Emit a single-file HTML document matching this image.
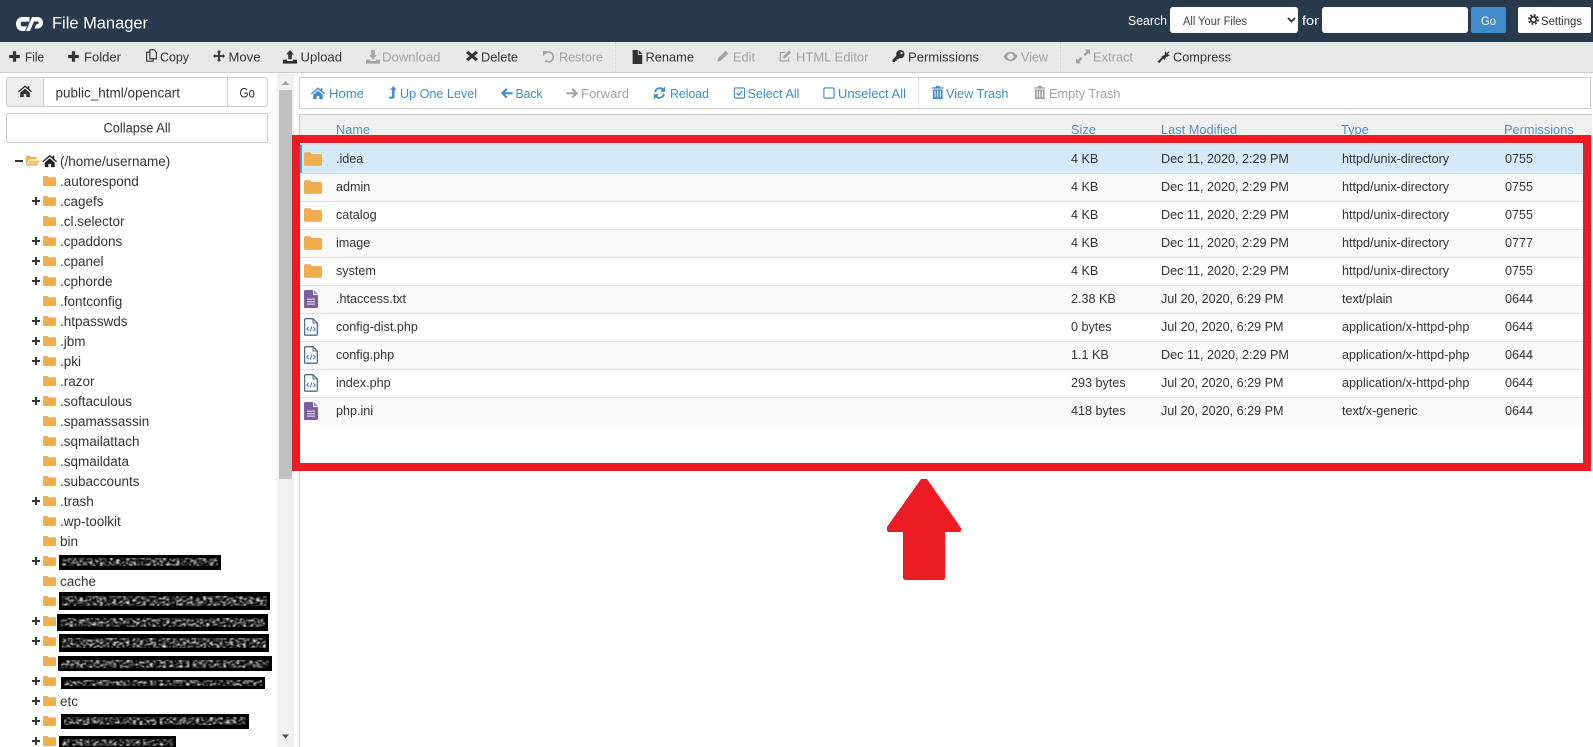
<!DOCTYPE html>
<html><head><meta charset="utf-8"><title>File Manager</title>
<style>
html,body{margin:0;padding:0;background:#fff;width:1593px;height:747px;overflow:hidden;font-family:"Liberation Sans",sans-serif;color:#333}
.a{position:absolute;box-sizing:border-box}
#stage{position:absolute;left:0;top:0;width:1593px;height:747px;overflow:hidden}
.box{background:#fff;border:1px solid #ccc}
ul{list-style:none;margin:0;padding:0;position:absolute;left:0;top:151px;width:277px;font-size:13.5px;color:#333}
li{height:20px;line-height:21px;position:relative;padding-left:60px;white-space:nowrap}
li svg{position:absolute;left:43px;top:5px;width:13px;height:10px;fill:#f0ad4e}
li.p:before{content:"";position:absolute;left:32px;top:9px;width:8px;height:2px;background:#333}
li.p:after{content:"";position:absolute;left:35px;top:6px;width:2px;height:8px;background:#333}
table{position:absolute;left:299px;top:145px;width:1293px;table-layout:fixed;border-collapse:collapse;font-size:12.6px;color:#333}
td{height:28px;padding:0;border-bottom:1px solid #ddd;box-sizing:border-box;white-space:nowrap}
tr:nth-child(even) td{background:#f9f9f9}
tr.sel td{background:#d5eaf8}
tr:last-child td{border-bottom:0}
td svg{display:block;margin-left:5px}
text{font-family:"Liberation Sans",sans-serif}
</style></head><body>
<div id="stage">
<div class="a" style="left:0;top:0;width:1593px;height:42px;background:#2a3a4d"></div>
<div class="a" style="left:0;top:42px;width:1593px;height:31px;background:#e8e8e8;border-bottom:1px solid #ccc"></div>
<div class="a" style="left:615px;top:42px;width:0;height:30px;border-left:1px dotted #ccc"></div>
<div class="a" style="left:1060px;top:42px;width:0;height:30px;border-left:1px dotted #ccc"></div>

<div class="a" style="left:1170px;top:7px;width:128px;height:26px;background:#fff;border-radius:3px"></div>
<div class="a" style="left:1322px;top:7px;width:146px;height:26px;background:#fff;border-radius:3px"></div>
<div class="a" style="left:1471px;top:7px;width:35px;height:26px;background:#428bca;border-radius:2px"></div>
<div class="a" style="left:1518px;top:7px;width:73px;height:26px;background:#fff;border-radius:2px"></div>

<div class="a" style="left:6px;top:77px;width:38px;height:30px;background:#eee;border:1px solid #ccc;border-radius:3px 0 0 3px"></div>
<div class="a box" style="left:43px;top:77px;width:185px;height:30px"></div>
<div class="a box" style="left:227px;top:77px;width:41px;height:30px;border-radius:0 3px 3px 0"></div>
<div class="a box" style="left:6px;top:113px;width:262px;height:30px;border-radius:2px"></div>

<div class="a" style="left:277px;top:73px;width:17px;height:674px;background:#f1f1f1"></div>
<div class="a" style="left:279px;top:90px;width:13px;height:389px;background:#c1c1c1"></div>

<div class="a box" style="left:299px;top:77px;width:1292px;height:32px"></div>
<div class="a" style="left:918px;top:78px;width:0;height:30px;border-left:1px dotted #ccc"></div>
<div class="a" style="left:299px;top:114px;width:1293px;height:633px;border:1px solid #ccc;border-bottom:0;border-right:0"></div>
<div class="a" style="left:300px;top:115px;width:1292px;height:30px;background:#f0f0f0;border-bottom:1px solid #ddd"></div>

<ul>
<li>(/home/username)</li>
<li><svg viewBox="0 0 13 10"><use href="#fold"/></svg>.autorespond</li>
<li class="p"><svg viewBox="0 0 13 10"><use href="#fold"/></svg>.cagefs</li>
<li><svg viewBox="0 0 13 10"><use href="#fold"/></svg>.cl.selector</li>
<li class="p"><svg viewBox="0 0 13 10"><use href="#fold"/></svg>.cpaddons</li>
<li class="p"><svg viewBox="0 0 13 10"><use href="#fold"/></svg>.cpanel</li>
<li class="p"><svg viewBox="0 0 13 10"><use href="#fold"/></svg>.cphorde</li>
<li><svg viewBox="0 0 13 10"><use href="#fold"/></svg>.fontconfig</li>
<li class="p"><svg viewBox="0 0 13 10"><use href="#fold"/></svg>.htpasswds</li>
<li class="p"><svg viewBox="0 0 13 10"><use href="#fold"/></svg>.jbm</li>
<li class="p"><svg viewBox="0 0 13 10"><use href="#fold"/></svg>.pki</li>
<li><svg viewBox="0 0 13 10"><use href="#fold"/></svg>.razor</li>
<li class="p"><svg viewBox="0 0 13 10"><use href="#fold"/></svg>.softaculous</li>
<li><svg viewBox="0 0 13 10"><use href="#fold"/></svg>.spamassassin</li>
<li><svg viewBox="0 0 13 10"><use href="#fold"/></svg>.sqmailattach</li>
<li><svg viewBox="0 0 13 10"><use href="#fold"/></svg>.sqmaildata</li>
<li><svg viewBox="0 0 13 10"><use href="#fold"/></svg>.subaccounts</li>
<li class="p"><svg viewBox="0 0 13 10"><use href="#fold"/></svg>.trash</li>
<li><svg viewBox="0 0 13 10"><use href="#fold"/></svg>.wp-toolkit</li>
<li><svg viewBox="0 0 13 10"><use href="#fold"/></svg>bin</li>
<li class="p"><svg viewBox="0 0 13 10"><use href="#fold"/></svg></li>
<li><svg viewBox="0 0 13 10"><use href="#fold"/></svg>cache</li>
<li><svg viewBox="0 0 13 10"><use href="#fold"/></svg></li>
<li class="p"><svg viewBox="0 0 13 10"><use href="#fold"/></svg></li>
<li class="p"><svg viewBox="0 0 13 10"><use href="#fold"/></svg></li>
<li><svg viewBox="0 0 13 10"><use href="#fold"/></svg></li>
<li class="p"><svg viewBox="0 0 13 10"><use href="#fold"/></svg></li>
<li class="p"><svg viewBox="0 0 13 10"><use href="#fold"/></svg>etc</li>
<li class="p"><svg viewBox="0 0 13 10"><use href="#fold"/></svg></li>
<li class="p"><svg viewBox="0 0 13 10"><use href="#fold"/></svg></li>
</ul>

<table>
<colgroup><col style="width:37px"><col style="width:735px"><col style="width:90px"><col style="width:181px"><col style="width:163px"><col style="width:87px"></colgroup>
<tr class="sel"><td><svg width="18" height="14" viewBox="0 0 13 10" fill="#f0ad4e"><use href="#fold"/></svg></td><td>.idea</td><td>4 KB</td><td>Dec 11, 2020, 2:29 PM</td><td>httpd/unix-directory</td><td>0755</td></tr>
<tr><td><svg width="18" height="14" viewBox="0 0 13 10" fill="#f0ad4e"><use href="#fold"/></svg></td><td>admin</td><td>4 KB</td><td>Dec 11, 2020, 2:29 PM</td><td>httpd/unix-directory</td><td>0755</td></tr>
<tr><td><svg width="18" height="14" viewBox="0 0 13 10" fill="#f0ad4e"><use href="#fold"/></svg></td><td>catalog</td><td>4 KB</td><td>Dec 11, 2020, 2:29 PM</td><td>httpd/unix-directory</td><td>0755</td></tr>
<tr><td><svg width="18" height="14" viewBox="0 0 13 10" fill="#f0ad4e"><use href="#fold"/></svg></td><td>image</td><td>4 KB</td><td>Dec 11, 2020, 2:29 PM</td><td>httpd/unix-directory</td><td>0777</td></tr>
<tr><td><svg width="18" height="14" viewBox="0 0 13 10" fill="#f0ad4e"><use href="#fold"/></svg></td><td>system</td><td>4 KB</td><td>Dec 11, 2020, 2:29 PM</td><td>httpd/unix-directory</td><td>0755</td></tr>
<tr><td><svg width="14" height="18" viewBox="0 0 14 18"><use href="#txt"/></svg></td><td>.htaccess.txt</td><td>2.38 KB</td><td>Jul 20, 2020, 6:29 PM</td><td>text/plain</td><td>0644</td></tr>
<tr><td><svg width="14" height="18" viewBox="0 0 14 18"><use href="#php"/></svg></td><td>config-dist.php</td><td>0 bytes</td><td>Jul 20, 2020, 6:29 PM</td><td>application/x-httpd-php</td><td>0644</td></tr>
<tr><td><svg width="14" height="18" viewBox="0 0 14 18"><use href="#php"/></svg></td><td>config.php</td><td>1.1 KB</td><td>Dec 11, 2020, 2:29 PM</td><td>application/x-httpd-php</td><td>0644</td></tr>
<tr><td><svg width="14" height="18" viewBox="0 0 14 18"><use href="#php"/></svg></td><td>index.php</td><td>293 bytes</td><td>Jul 20, 2020, 6:29 PM</td><td>application/x-httpd-php</td><td>0644</td></tr>
<tr><td><svg width="14" height="18" viewBox="0 0 14 18"><use href="#txt"/></svg></td><td>php.ini</td><td>418 bytes</td><td>Jul 20, 2020, 6:29 PM</td><td>text/x-generic</td><td>0644</td></tr>
</table>
<div class="a" style="left:300px;top:145px;width:2px;height:28px;background:#2aa9dd"></div>

<svg class="a" style="left:0;top:0" width="1593" height="747" viewBox="0 0 1593 747">
<defs>
<symbol id="fold" viewBox="0 0 13 10"><path d="M1 0h3.5l1.2 1.4H12a1 1 0 0 1 1 1V9a1 1 0 0 1-1 1H1a1 1 0 0 1-1-1V1a1 1 0 0 1 1-1z"/></symbol>
<symbol id="txt" viewBox="0 0 14 18"><path fill="#7d5e9e" d="M1 0h8v5h5v12a1 1 0 0 1-1 1H1a1 1 0 0 1-1-1V1a1 1 0 0 1 1-1z"/><path fill="#a48fbd" d="M10 0l4 4h-4z"/><path fill="#d9d2e4" d="M3 8.5h8v1.3H3zM3 11h8v1.3H3zM3 13.5h8v1.3H3z"/></symbol>
<symbol id="php" viewBox="0 0 14 18"><path fill="#fff" stroke="#4f6d8c" stroke-width="1.3" d="M1.6.7h7.4l4.3 4.3v11.2a1 1 0 0 1-1 1H1.6a1 1 0 0 1-1-1V1.7a1 1 0 0 1 1-1z"/><path fill="none" stroke="#4f6d8c" d="M9 1v4h4"/><path fill="none" stroke="#3b7fbf" stroke-width="1.1" d="M4.6 9L2.8 11l1.8 2M9.4 9l1.8 2-1.8 2M7.8 8.5l-1.6 5"/></symbol>
<symbol id="plus" viewBox="0 0 16 16"><path d="M6 1.5h4V6h4.5v4H10v4.5H6V10H1.5V6H6z"/></symbol>
<symbol id="copy" viewBox="0 0 16 16"><path fill="none" stroke="currentColor" stroke-width="1.4" d="M6 1h5l3 3v8H6zM6 4H2v11h8v-3"/></symbol>
<symbol id="move" viewBox="0 0 16 16"><path d="M8 0l3 3H9.2v3.8H13V5l3 3-3 3V9.2H9.2V13H11l-3 3-3-3h1.8V9.2H3V11L0 8l3-3v1.8h3.8V3H5z"/></symbol>
<symbol id="up" viewBox="0 0 16 16"><path d="M8 0l4.5 5H10v5.5H6V5H3.5zM0 11h4.8v1.5h6.4V11H16v4.5H0z"/></symbol>
<symbol id="down" viewBox="0 0 16 16"><path d="M6 0h4v5.5h2.5L8 11 3.5 5.5H6zM0 11h4.8v1.5h6.4V11H16v4.5H0z"/></symbol>
<symbol id="x" viewBox="0 0 16 16"><path d="M3.5 1.5L8 5.5l4.5-4 2.800 2.800L11 8l4.300 3.700-2.800 2.800L8 10.500l-4.500 4-2.800-2.800L5 8 .7 4.300z"/></symbol>
<symbol id="undo" viewBox="0 0 16 16"><path fill="none" stroke="currentColor" stroke-width="2" d="M3.5 4.5A6 6 0 1 1 4 13"/><path d="M1 1l6 .5L1.5 7.5z"/></symbol>
<symbol id="file" viewBox="0 0 16 16"><path d="M3 0h6v5.500h5V16H3zM10 0l4 4.500h-4z"/></symbol>
<symbol id="pen" viewBox="0 0 16 16"><path d="M11.500 1L15 4.500 5 14.500l-4.500 1 1-4.500z"/></symbol>
<symbol id="edit" viewBox="0 0 16 16"><path fill="none" stroke="currentColor" stroke-width="1.500" d="M12 10v4H1.500V3.500H8"/><path d="M12.500 1L15 3.500 8 10.500l-3 .6.600-3z"/></symbol>
<symbol id="key" viewBox="0 0 16 16"><path fill-rule="evenodd" d="M10.500 0A5.500 5.500 0 1 1 9 10.800L7.500 12.500H5.500v2h-2V16H0v-3l5.300-5.500A5.500 5.500 0 0 1 10.500 0zm1.500 2.500a1.500 1.500 0 1 0 0 3 1.500 1.500 0 0 0 0-3z"/></symbol>
<symbol id="eye" viewBox="0 0 16 16"><path fill-rule="evenodd" d="M8 2.500c4 0 7 3.500 8 5.500-1 2-4 5.500-8 5.500S1 10 0 8c1-2 4-5.500 8-5.500zM8 4.500a3.500 3.500 0 1 0 0 7 3.500 3.500 0 0 0 0-7z"/></symbol>
<symbol id="ext" viewBox="0 0 16 16"><path d="M10 0h6v6l-2-2-3.500 3.500-2-2L12 2zM6 16H0v-6l2 2 3.500-3.500 2 2L4 14z"/></symbol>
<symbol id="com" viewBox="0 0 16 16"><path d="M10 1l2 3 2.500-2.500 1 1L13 5l3 1.500-5 2.500-1.500 3.500-2-2-4.500 5.500-2.500-1.500 5-5L5.500 8l4-2z"/></symbol>
<symbol id="home" viewBox="0 0 16 16"><path d="M8 1.500l3 2.600V2.500h2v3.300l3 2.600-1 1.100-7-5.900-7 5.900L0 8.400zM2.500 10L8 5.300l5.500 4.700v5H9.500v-3.500h-3V15h-4z"/></symbol>
<symbol id="lvl" viewBox="0 0 16 16"><path d="M9 0l4 4.800h-2.400v7.700c0 2-1 3.200-3 3.200H4V13h2.500c.6 0 1-.4 1-1V4.800H5z"/></symbol>
<symbol id="left" viewBox="0 0 16 16"><path d="M7.500 2l1.800 1.800L6 7h9.500v2.500H6l3.300 3.200-1.800 1.800L1 8.200z"/></symbol>
<symbol id="right" viewBox="0 0 16 16"><path d="M8.500 2L6.700 3.800 10 7H.5v2.500H10l-3.300 3.200 1.800 1.800L15 8.200z"/></symbol>
<symbol id="rel" viewBox="0 0 16 16"><path fill="none" stroke="currentColor" stroke-width="2.200" d="M2.500 7A5.800 5.800 0 0 1 12.500 4M13.500 9a5.800 5.800 0 0 1-10 3"/><path d="M15 0v6.500H8.500zM1 16V9.500h6.500z"/></symbol>
<symbol id="chk" viewBox="0 0 16 16"><rect x="1.700" y="1.700" width="12.600" height="12.600" rx="1.500" fill="none" stroke="currentColor" stroke-width="1.400"/><path fill="none" stroke="currentColor" stroke-width="1.700" d="M4.500 8l2.500 2.500 4.500-5"/></symbol>
<symbol id="sq" viewBox="0 0 16 16"><rect x="1.700" y="1.700" width="12.600" height="12.600" rx="1.500" fill="none" stroke="currentColor" stroke-width="1.400"/></symbol>
<symbol id="tr" viewBox="0 0 14 16"><path d="M5 0h4l1 1.800h4v1.500H0V1.800h4zM1 4.300h12V16H1zM3.200 6v8h1.100V6zM6.400 6v8h1.200V6zM9.700 6v8h1.100V6z" fill-rule="evenodd"/></symbol>
<symbol id="gear" viewBox="0 0 16 16"><circle cx="8" cy="8" r="4" fill="none" stroke="currentColor" stroke-width="2.600"/><circle cx="8" cy="8" r="6.700" fill="none" stroke="currentColor" stroke-width="2.400" stroke-dasharray="3 2.260"/></symbol>
<filter id="nz" x="0" y="0" width="100%" height="100%" color-interpolation-filters="sRGB"><feTurbulence type="fractalNoise" baseFrequency=".3 .5" numOctaves="2" seed="4"/><feColorMatrix values="3 0 0 0 -1.300  3 0 0 0 -1.300  3 0 0 0 -1.300  0 0 0 0 1"/><feGaussianBlur stdDeviation=".4"/></filter>
</defs>

<!-- header -->
<path fill="#fff" d="M29.500 17H22.500C18.700 17 16 20 16 24s2.700 7 6.500 7H25l2-4.600h-4.200c-1.300 0-2.200-1-2.200-2.400s.9-2.400 2.200-2.400h6.700zM32 17h5.500c3.500 0 5.500 2.600 5.500 5.800s-2.500 5.700-5.500 5.700h-3l1.800-4.300h.9c.9 0 1.500-.6 1.500-1.400s-.6-1.400-1.500-1.400H34L30 31h-4z"/>
<g fill="#fff"><text x="52" y="28.500" font-size="17" textLength="96" lengthAdjust="spacingAndGlyphs">File Manager</text>
<text x="1128" y="25" font-size="13" textLength="39" lengthAdjust="spacingAndGlyphs">Search</text>
<text x="1302" y="25" font-size="13" textLength="17" lengthAdjust="spacingAndGlyphs">for</text>
<text x="1481" y="25" font-size="12" textLength="15" lengthAdjust="spacingAndGlyphs">Go</text></g>
<text x="1183" y="25" font-size="11.500" fill="#444" textLength="64" lengthAdjust="spacingAndGlyphs">All Your Files</text>
<path d="M1288 18l3.500 3.500L1295 18" fill="none" stroke="#333" stroke-width="1.800"/>
<use href="#gear" x="1528" y="14" width="11" height="11" color="#333" fill="#333"/>
<text x="1541" y="25" font-size="11.500" fill="#333" textLength="41" lengthAdjust="spacingAndGlyphs">Settings</text>

<!-- main toolbar -->
<g fill="#333" color="#333" font-size="13.200">
<use href="#plus" x="8" y="50" width="13" height="13"/><text x="25" y="61.500" textLength="19" lengthAdjust="spacingAndGlyphs">File</text>
<use href="#plus" x="67" y="50" width="13" height="13"/><text x="84" y="61.500" textLength="37" lengthAdjust="spacingAndGlyphs">Folder</text>
<use href="#copy" x="145" y="49" width="13" height="13"/><text x="160" y="61.500" textLength="29" lengthAdjust="spacingAndGlyphs">Copy</text>
<use href="#move" x="213" y="50" width="12" height="12"/><text x="228.500" y="61.500" textLength="32" lengthAdjust="spacingAndGlyphs">Move</text>
<use href="#up" x="283" y="50" width="14" height="14"/><text x="300.500" y="61.500" textLength="41.500" lengthAdjust="spacingAndGlyphs">Upload</text>
<use href="#x" x="465.500" y="49.500" width="13" height="13"/><text x="481" y="61.500" textLength="37" lengthAdjust="spacingAndGlyphs">Delete</text>
<use href="#file" x="630" y="50" width="14" height="14"/><text x="645.500" y="61.500" textLength="48.500" lengthAdjust="spacingAndGlyphs">Rename</text>
<use href="#key" x="892.500" y="50" width="12" height="12"/><text x="908" y="61.500" textLength="71" lengthAdjust="spacingAndGlyphs">Permissions</text>
<use href="#com" x="1157" y="50" width="13" height="13"/><text x="1173" y="61.500" textLength="58" lengthAdjust="spacingAndGlyphs">Compress</text>
</g>
<g fill="#a3a3a3" color="#a3a3a3" font-size="13.200">
<use href="#down" x="366" y="50" width="14" height="14"/><text x="382" y="61.500" textLength="58.500" lengthAdjust="spacingAndGlyphs">Download</text>
<use href="#undo" x="542" y="50" width="13" height="13"/><text x="559" y="61.500" textLength="44" lengthAdjust="spacingAndGlyphs">Restore</text>
<use href="#pen" x="717" y="50" width="12" height="12"/><text x="733" y="61.500" textLength="22" lengthAdjust="spacingAndGlyphs">Edit</text>
<use href="#edit" x="779" y="49.500" width="13" height="13"/><text x="796" y="61.500" textLength="72.500" lengthAdjust="spacingAndGlyphs">HTML Editor</text>
<use href="#eye" x="1003" y="49.500" width="15" height="14"/><text x="1021" y="61.500" textLength="27" lengthAdjust="spacingAndGlyphs">View</text>
<use href="#ext" x="1076" y="49.500" width="14" height="14"/><text x="1093" y="61.500" textLength="40" lengthAdjust="spacingAndGlyphs">Extract</text>
</g>

<!-- path bar -->
<use href="#home" x="18" y="84" width="14" height="14" fill="#333"/>
<g fill="#333" font-size="13.500">
<text x="55.500" y="97.500" textLength="124.500" lengthAdjust="spacingAndGlyphs">public_html/opencart</text>
<text x="239.500" y="97.500" textLength="15.500" lengthAdjust="spacingAndGlyphs">Go</text>
<text x="103.500" y="132.500" textLength="67" lengthAdjust="spacingAndGlyphs">Collapse All</text>
</g>

<!-- scrollbar arrows -->
<path d="M281.500 85l4-4 4 4z" fill="#a3a3a3"/>
<path d="M282 734.500h7l-3.500 4z" fill="#505050"/>

<!-- tree root icons -->
<rect x="15" y="160" width="8" height="2" fill="#333"/>
<path fill="#f0ad4e" d="M26 157a1 1 0 0 1 1-1h3l1 1.300h5a1 1 0 0 1 1 1v1h-8l-3 6z"/><path fill="#f4c580" d="M29 160.500h11l-3 5.500H26z"/>
<use href="#home" x="42.500" y="153.500" width="14.500" height="14.500" fill="#222"/>

<!-- second toolbar -->
<g fill="#428bca" color="#428bca" font-size="13">
<use href="#home" x="311" y="86" width="14" height="14"/><text x="329" y="98" textLength="35" lengthAdjust="spacingAndGlyphs">Home</text>
<use href="#lvl" x="386" y="85.500" width="13" height="14"/><text x="400" y="98" textLength="77" lengthAdjust="spacingAndGlyphs">Up One Level</text>
<use href="#left" x="500" y="86.500" width="13" height="13"/><text x="515.500" y="98" textLength="27" lengthAdjust="spacingAndGlyphs">Back</text>
<use href="#rel" x="653" y="86.500" width="13" height="13"/><text x="670" y="98" textLength="39" lengthAdjust="spacingAndGlyphs">Reload</text>
<use href="#chk" x="733" y="86.500" width="13" height="13"/><text x="747.500" y="98" textLength="52" lengthAdjust="spacingAndGlyphs">Select All</text>
<use href="#sq" x="822.500" y="86.500" width="13" height="13"/><text x="838" y="98" textLength="68" lengthAdjust="spacingAndGlyphs">Unselect All</text>
<use href="#tr" x="932" y="85.500" width="11.500" height="14"/><text x="946" y="98" textLength="62.500" lengthAdjust="spacingAndGlyphs">View Trash</text>
</g>
<g fill="#a3a3a3" color="#a3a3a3" font-size="13">
<use href="#right" x="566" y="86.500" width="13" height="13"/><text x="581" y="98" textLength="48" lengthAdjust="spacingAndGlyphs">Forward</text>
<use href="#tr" x="1034" y="85.500" width="11.500" height="14"/><text x="1049" y="98" textLength="71.500" lengthAdjust="spacingAndGlyphs">Empty Trash</text>
</g>

<!-- table head -->
<g fill="#5a8fca" font-size="12.800">
<text x="336" y="134">Name</text><text x="1071" y="134">Size</text><text x="1161" y="134">Last Modified</text><text x="1341" y="134">Type</text><text x="1504" y="134">Permissions</text>
</g>

<!-- redaction blobs -->
<g fill="#000">
<rect x="59" y="555" width="162" height="15"/><rect x="59" y="592" width="211" height="18"/><rect x="57" y="614" width="211" height="17"/><rect x="59" y="634" width="210" height="18"/><rect x="58" y="656" width="214" height="15"/><rect x="61" y="677" width="204" height="12"/><rect x="61" y="714" width="188" height="15"/><rect x="59" y="736" width="117" height="11"/>
</g>
<rect filter="url(#nz)" x="62" y="558" width="156" height="8"/>
<rect filter="url(#nz)" x="62" y="596" width="205" height="10"/>
<rect filter="url(#nz)" x="60" y="618" width="205" height="9"/>
<rect filter="url(#nz)" x="62" y="638" width="204" height="10"/>
<rect filter="url(#nz)" x="61" y="660" width="208" height="8"/>
<rect filter="url(#nz)" x="64" y="680" width="198" height="6"/>
<rect filter="url(#nz)" x="64" y="717" width="182" height="8"/>
<rect filter="url(#nz)" x="62" y="739" width="111" height="7"/>

<!-- red highlight + arrow -->
<rect x="296" y="139" width="1291" height="328" fill="none" stroke="#ed1c24" stroke-width="8"/>
<path fill="#ed1c24" d="M921 479h6l34 49v2a2 2 0 0 1-2 2h-14v46a2 2 0 0 1-2 2h-37a3 3 0 0 1-3-2v-46h-14a2 2 0 0 1-2-2v-3z"/>
</svg>
</div>
</body></html>
